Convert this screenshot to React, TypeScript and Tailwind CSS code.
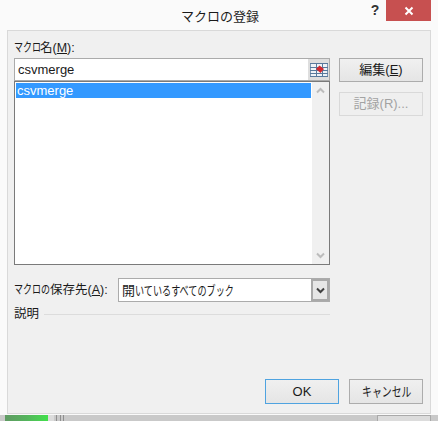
const font = { fontFamily: '"Liberation Sans", "Noto Sans CJK JP", sans-serif' };

function Chevron({ up, className }: { up?: boolean; className: string }) {
  return (
    <svg width="9" height="7" viewBox="0 0 9 7" className={className}>
      <path d={up ? "M1 5.5 L4.5 2 L8 5.5" : "M1 1.5 L4.5 5 L8 1.5"} fill="none" stroke="currentColor" strokeWidth="2" />
    </svg>
  );
}

function RefIcon() {
  return (
    <svg width="18" height="14" viewBox="0 0 18 14">
      <rect x="0.5" y="0.5" width="17" height="13" fill="#eef2f7" stroke="#7d97b3" />
      <path d="M0 0.5 H18 M0 4.5 H18 M0 7.5 H18 M0 10.5 H18 M0 13.5 H18 M6.5 0 V14 M12.5 0 V14" stroke="#58799c" strokeWidth="1" />
      <path d="M6 6 L9.5 2.5 L14 6 L10.5 10 Z" fill="#d0282f" />
    </svg>
  );
}

// narrow kana as in Meiryo UI: the glyphs are squeezed, the box keeps its real width
function Narrow({ w, scale, children }: { w: string; scale: string; children: React.ReactNode }) {
  return (
    <span className={`inline-block ${w}`}>
      <span className={`inline-block origin-left whitespace-nowrap ${scale}`}>{children}</span>
    </span>
  );
}

function Btn({ label, className }: { label: React.ReactNode; className: string }) {
  return (
    <button className={`flex items-center justify-center text-[13px] ${className}`}>{label}</button>
  );
}

export default function App() {
  return (
    <div className="w-[438px] h-[421px] overflow-hidden bg-[#fafafa] flex flex-col text-[#1a1a1a]" style={font}>
      <div className="h-[30px] flex shrink-0">
        <div className="w-[364px] flex justify-end items-start pt-[7px]">
          <span className="text-[13px] leading-[19px] mr-[105px]">マクロの登録</span>
        </div>
        <span className="w-[22px] text-[14px] leading-[20px] font-bold text-[#333] text-center">?</span>
        <div className="w-[45px] h-[21px] bg-[#c75050] flex items-center justify-center">
          <svg width="10" height="10" viewBox="0 0 10 10">
            <path d="M1.5 1.5 L8.5 8.5 M8.5 1.5 L1.5 8.5" stroke="#fff" strokeWidth="2" />
          </svg>
        </div>
      </div>

      <div className="ml-[7px] w-[424px] h-[384px] shrink-0 border border-[#d9d9d9] bg-[#f0f0f0] px-[6px] pt-[7px] flex flex-col">
        <div className="flex gap-[9px]">
          <div className="w-[316px] flex flex-col">
            <div className="text-[12.5px] leading-[21px] h-[20px] whitespace-nowrap">
              <Narrow w="w-[26px]" scale="scale-x-[0.72]">マクロ</Narrow>名(<span className="underline">M</span>):
            </div>
            <div className="h-[23px] flex border border-[#ababab] bg-white">
              <div className="flex-1 text-[13px] leading-[21px] pl-[3px]">csvmerge</div>
              <div className="w-[21px] bg-[#dedede] flex items-center justify-center">
                <RefIcon />
              </div>
            </div>
            <div className="h-[184px] border border-[#7a7a7a] bg-white flex">
              <div className="flex-1 p-[1px]">
                <div className="h-[15px] bg-[#3399ff] text-white text-[13px] leading-[15px] pl-[1px]">csvmerge</div>
              </div>
              <div className="w-[17px] bg-[#f0f0f0] flex flex-col items-center justify-between py-[5px]">
                <Chevron up className="text-[#bcbcbc]" />
                <Chevron className="text-[#bcbcbc]" />
              </div>
            </div>
          </div>
          <div className="flex flex-col pt-[20px]">
            <Btn label={<>編集(<span className="underline">E</span>)</>} className="w-[84px] h-[24px] border border-[#acacac] bg-gradient-to-b from-[#f0f0f0] to-[#e5e5e5]" />
            <Btn label="記録(R)..." className="w-[84px] h-[24px] mt-[10px] border border-[#d9d9d9] bg-[#efefef] text-[#a3a3a3]" />
          </div>
        </div>

        <div className="flex items-center mt-[13px] w-[316px]">
          <div className="w-[104px] text-[12.5px] leading-[21px] whitespace-nowrap">
            <Narrow w="w-[36px]" scale="scale-x-[0.72]">マクロの</Narrow>保存先(<span className="underline">A</span>):
          </div>
          <div className="flex-1 h-[24px] flex border border-[#ababab] bg-white">
            <div className="flex-1 text-[13px] leading-[24px] pl-[3px] whitespace-nowrap">
              開<Narrow w="w-[100px]" scale="scale-x-[0.7]">いているすべてのブック</Narrow>
            </div>
            <div className="w-[18px] border-2 border-[#a9a9a9] bg-[#e6e6e6] flex items-center justify-center text-[#404040]">
              <Chevron className="" />
            </div>
          </div>
        </div>

        <div className="flex items-center w-[316px] h-[19px] mt-[3px]">
          <span className="text-[12.5px] leading-[21px] w-[30px]">説明</span>
          <div className="flex-1 h-px bg-[#dcdcdc]" />
        </div>

        <div className="flex justify-end gap-[10px] mt-[55px] mr-[1px]">
          <Btn label="OK" className="w-[74px] h-[25px] border border-[#4fa3e0] bg-gradient-to-b from-[#f0f0f0] to-[#e5e5e5]" />
          <Btn label={<Narrow w="w-[48px]" scale="scale-x-[0.76]">キャンセル</Narrow>} className="w-[74px] h-[25px] border border-[#acacac] bg-gradient-to-b from-[#f0f0f0] to-[#e5e5e5]" />
        </div>
      </div>

      <div className="mt-[1px] flex-1 bg-[#c9c9c9] flex pl-[5px]">
        <div className="w-[43px] h-full bg-gradient-to-r from-[#5f9a63] via-[#54b45c] to-[#3fe04a]" />
        <div className="w-[6px] h-full bg-[#dcdcdc]" />
        <div className="w-[3px] h-full border-r border-[#8f8f8f]" />
        <div className="w-[4px] h-full border-r border-[#8f8f8f]" />
        <div className="w-[3px] h-full border-r border-[#8f8f8f]" />
        <div className="ml-[313px] w-[54px] h-full bg-[#dcdcdc] border-l border-t border-r border-[#a9a9a9]" />
      </div>
    </div>
  );
}
